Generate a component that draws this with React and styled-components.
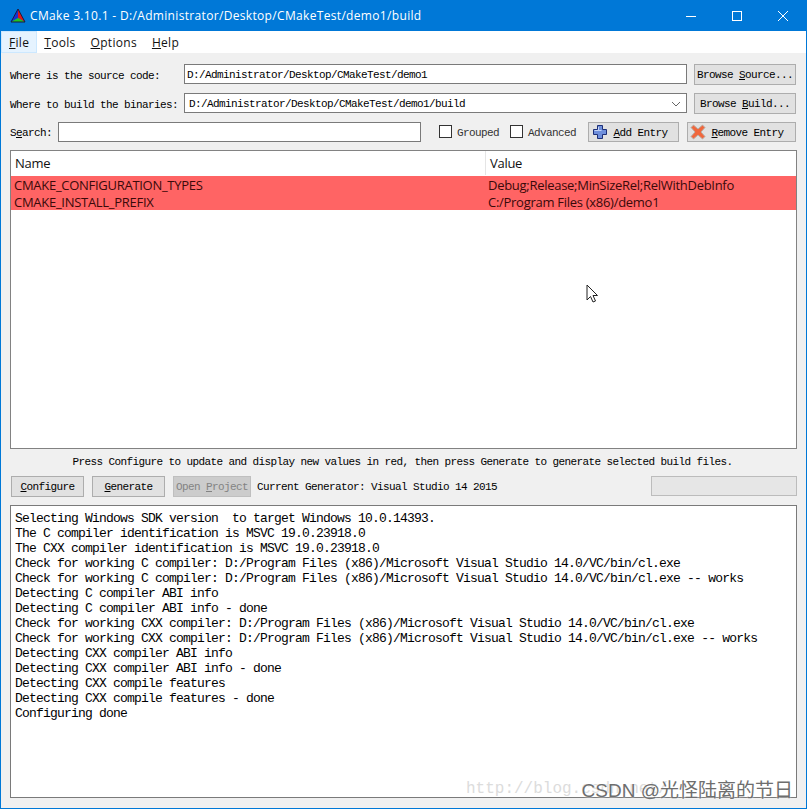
import React from "react";
import styled, { createGlobalStyle } from "styled-components";

const GlobalStyle = createGlobalStyle`
  html, body {
    margin: 0;
    padding: 0;
    background: #f0f0f0;
  }
  * {
    box-sizing: border-box;
  }
`;

const mono = `"Liberation Mono", "DejaVu Sans Mono", monospace`;
const ui = `"Open Sans", "Noto Sans", sans-serif`;

const Window = styled.div`
  position: relative;
  width: 807px;
  height: 809px;
  display: flex;
  flex-direction: column;
  background: #f0f0f0;
  border: 1px solid #0078d7;
  border-top: none;
  overflow: hidden;
`;

const TitleBar = styled.div`
  height: 31px;
  margin: 0 -1px;
  padding-right: 1px;
  display: flex;
  align-items: center;
  background: #0078d7;
  color: #fff;
  font: 12px ${ui};
`;

const Logo = styled.svg`
  width: 16px;
  height: 16px;
  margin: 0 4px 0 10px;
`;

const TitleText = styled.div`
  flex: 1;
  white-space: nowrap;
  letter-spacing: 0.33px;
`;

const WinButton = styled.div`
  width: 46px;
  height: 31px;
  display: flex;
  align-items: center;
  justify-content: center;
`;

const MenuBar = styled.div`
  height: 22px;
  display: flex;
  align-items: stretch;
  background: #fff;
  font: 12px ${ui};
  letter-spacing: 0.3px;
  color: #111;
`;

const MenuItem = styled.div`
  display: flex;
  align-items: center;
  padding: 0 8px;
  margin-right: -1px;
  background: ${(p) => (p.$active ? "#e5f3ff" : "transparent")};
  box-shadow: ${(p) => (p.$active ? "inset 0 0 0 1px #cce8ff" : "none")};
`;

const Mn = styled.span`
  text-decoration: underline;
`;

const Content = styled.div`
  flex: 1;
  display: flex;
  flex-direction: column;
  padding: 11px 9px 10px 9px;
  min-height: 0;
  font: 11px ${mono};
  letter-spacing: -0.6px;
  color: #000;
`;

const Row = styled.div`
  display: flex;
  align-items: flex-start;
  height: 21px;
  margin-bottom: ${(p) => p.$gap || "8px"};
  margin-right: ${(p) => p.$inset || "0"};
  white-space: pre;
`;

const Label = styled.div`
  width: ${(p) => p.$width};
  height: 20px;
  flex: none;
  display: flex;
  align-items: center;
  padding-top: ${(p) => p.$top || "3px"};
`;

const TextField = styled.div`
  flex: ${(p) => (p.$width ? "none" : "1")};
  width: ${(p) => p.$width || "auto"};
  height: 20px;
  display: flex;
  align-items: center;
  justify-content: space-between;
  padding: 1px ${(p) => (p.$combo ? "5px" : "2px")} 0 ${(p) => (p.$combo ? "4px" : "2px")};
  background: #fff;
  border: 1px solid #7a7a7a;
`;

const Button = styled.div`
  width: ${(p) => p.$width};
  height: ${(p) => p.$height || "21px"};
  flex: none;
  display: flex;
  align-items: center;
  justify-content: center;
  margin-left: ${(p) => p.$left || "0"};
  padding: 1px ${(p) => p.$shift || "0"} 0 0;
  background: ${(p) => (p.$disabled ? "#cccccc" : "#e1e1e1")};
  border: 1px solid ${(p) => (p.$disabled ? "#bfbfbf" : "#adadad")};
  color: ${(p) => (p.$disabled ? "#838383" : "#000")};
`;

const ButtonIcon = styled.svg`
  width: 16px;
  height: 16px;
  margin: -1px 5px 0 0;
`;

const Check = styled.div`
  width: 13px;
  height: 13px;
  flex: none;
  margin: 3px 5px 0 ${(p) => p.$left};
  background: #fff;
  border: 1px solid #333;
`;

const CheckLabel = styled.div`
  width: ${(p) => p.$width};
  height: 20px;
  flex: none;
  display: flex;
  align-items: center;
  padding-top: 1px;
  color: #333;
`;

const Table = styled.div`
  height: 299px;
  flex: none;
  display: flex;
  flex-direction: column;
  background: #fff;
  border: 1px solid #828282;
  font: 13px ${ui};
  letter-spacing: -0.28px;
  color: #111;
`;

const Columns = styled.div`
  display: grid;
  grid-template-columns: 474px 1fr;
  height: ${(p) => p.$height};
  align-items: center;
  padding-bottom: ${(p) => (p.$bg ? "3px" : "1px")};
  background: ${(p) => p.$bg || "transparent"};
  color: ${(p) => (p.$bg ? "#3a0a0a" : "#111")};
`;

const HeadCell = styled.div`
  height: 100%;
  display: flex;
  align-items: center;
  padding-left: 4px;
  border-left: ${(p) => (p.$divided ? "1px solid #e5e5e5" : "none")};
`;

const Cell = styled.div`
  padding-left: 3px;
  white-space: nowrap;
`;

const Hint = styled.div`
  height: 27px;
  flex: none;
  display: flex;
  align-items: center;
  justify-content: center;
  padding: 0 2px 2px 0;
  white-space: pre;
`;

const ActionRow = styled.div`
  height: 21px;
  flex: none;
  display: flex;
  align-items: center;
  padding-left: 1px;
  margin-bottom: 8px;
  white-space: pre;
`;

const Generator = styled.div`
  flex: 1;
  margin-left: 6px;
  padding-top: 1px;
`;

const Progress = styled.div`
  width: 146px;
  height: 20px;
  margin-top: -1px;
  background: #e6e6e6;
  border: 1px solid #bcbcbc;
`;

const Output = styled.div`
  flex: 1;
  min-height: 0;
  padding: 5px 4px;
  background: #fff;
  border: 1px solid #7a7a7a;
  font: 13px/15px ${mono};
  letter-spacing: -0.8px;
  color: #000;
  white-space: pre;
`;

const Cursor = styled.svg`
  position: absolute;
  left: 585px;
  top: 284px;
  width: 13px;
  height: 20px;
`;

const Watermark = styled.div`
  position: absolute;
  left: 465px;
  bottom: 7px;
  width: 328px;
  height: 24px;
  overflow: hidden;
  font: 16px/24px ${mono};
  color: #dcdcdc;
  white-space: nowrap;
`;

const Signature = styled.div`
  position: absolute;
  right: 13px;
  bottom: 6px;
  font: 19px/22px "Liberation Sans", "Noto Sans CJK SC", sans-serif;
  color: #6e6e6e;
  white-space: nowrap;
  text-shadow: 0 0 2px #fff;
`;

const outputLines = [
  "Selecting Windows SDK version  to target Windows 10.0.14393.",
  "The C compiler identification is MSVC 19.0.23918.0",
  "The CXX compiler identification is MSVC 19.0.23918.0",
  "Check for working C compiler: D:/Program Files (x86)/Microsoft Visual Studio 14.0/VC/bin/cl.exe",
  "Check for working C compiler: D:/Program Files (x86)/Microsoft Visual Studio 14.0/VC/bin/cl.exe -- works",
  "Detecting C compiler ABI info",
  "Detecting C compiler ABI info - done",
  "Check for working CXX compiler: D:/Program Files (x86)/Microsoft Visual Studio 14.0/VC/bin/cl.exe",
  "Check for working CXX compiler: D:/Program Files (x86)/Microsoft Visual Studio 14.0/VC/bin/cl.exe -- works",
  "Detecting CXX compiler ABI info",
  "Detecting CXX compiler ABI info - done",
  "Detecting CXX compile features",
  "Detecting CXX compile features - done",
  "Configuring done",
];

const App = () => {
  return (
    <Window>
      <GlobalStyle />
      <TitleBar>
        <Logo viewBox="0 0 16 16">
          <path d="M8 1 L1 14 L8 10 Z" fill="#1a2fd0" />
          <path d="M8 1 L15 14 L8 10 Z" fill="#e01818" />
          <path d="M1 14 L8 10 L15 14 Z" fill="#22c422" />
          <path d="M8 1 L1 14 L15 14 Z" fill="none" stroke="#1a1a40" strokeWidth="1" />
        </Logo>
        <TitleText>CMake 3.10.1 - D:/Administrator/Desktop/CMakeTest/demo1/build</TitleText>
        <WinButton>
          <svg width="10" height="10" viewBox="0 0 10 10">
            <path d="M0 5.5 H10" stroke="#fff" strokeWidth="1" />
          </svg>
        </WinButton>
        <WinButton>
          <svg width="10" height="10" viewBox="0 0 10 10">
            <rect x="0.5" y="0.5" width="9" height="9" fill="none" stroke="#fff" strokeWidth="1" />
          </svg>
        </WinButton>
        <WinButton>
          <svg width="10" height="10" viewBox="0 0 10 10">
            <path d="M0 0 L10 10 M10 0 L0 10" stroke="#fff" strokeWidth="1" />
          </svg>
        </WinButton>
      </TitleBar>
      <MenuBar>
        <MenuItem $active>
          <Mn>F</Mn>ile
        </MenuItem>
        <MenuItem>
          <Mn>T</Mn>ools
        </MenuItem>
        <MenuItem>
          <Mn>O</Mn>ptions
        </MenuItem>
        <MenuItem>
          <Mn>H</Mn>elp
        </MenuItem>
      </MenuBar>
      <Content>
        <Row $inset="1px">
          <Label $width="174px">Where is the source code:</Label>
          <TextField>D:/Administrator/Desktop/CMakeTest/demo1</TextField>
          <Button $width="102px" $left="7px">
            <span>
              Browse <Mn>S</Mn>ource...
            </span>
          </Button>
        </Row>
        <Row $inset="1px">
          <Label $width="174px">Where to build the binaries:</Label>
          <TextField $combo>
            D:/Administrator/Desktop/CMakeTest/demo1/build
            <svg width="10" height="6" viewBox="0 0 10 6">
              <path d="M1 1 L5 5 L9 1" fill="none" stroke="#666" strokeWidth="1" />
            </svg>
          </TextField>
          <Button $width="102px" $left="7px">
            <span>
              Browse <Mn>B</Mn>uild...
            </span>
          </Button>
        </Row>
        <Row $gap="7px">
          <Label $width="48px" $top="1px">
            <span>
              S<Mn>e</Mn>arch:
            </span>
          </Label>
          <TextField $width="363px" />
          <Check $left="18px" />
          <CheckLabel $width="53px">Grouped</CheckLabel>
          <Check $left="0" />
          <CheckLabel $width="60px">Advanced</CheckLabel>
          <Button $width="91px" $height="20px" $shift="7px">
            <ButtonIcon viewBox="0 0 16 16">
              <path
                d="M5.5 1.5 H10.5 V5.5 H14.5 V10.5 H10.5 V14.5 H5.5 V10.5 H1.5 V5.5 H5.5 Z"
                fill="#6f8fdc"
                stroke="#1c2f78"
                strokeWidth="1"
              />
              <path d="M6.5 6.5 H9.5 M6.5 3 V6.5 M2.5 6.5 H6.5" stroke="#c4d4f6" strokeWidth="1" fill="none" />
            </ButtonIcon>
            <span>
              <Mn>A</Mn>dd Entry
            </span>
          </Button>
          <Button $width="109px" $height="20px" $left="8px" $shift="9px">
            <ButtonIcon viewBox="0 0 16 16">
              <path
                d="M3.5 1 L8 5 L12.5 1 L15 3.5 L11 8 L15 12.5 L12.5 15 L8 11 L3.5 15 L1 12.5 L5 8 L1 3.5 Z"
                fill="#f0673c"
                stroke="#b9b2ac"
                strokeWidth="1"
              />
            </ButtonIcon>
            <span>
              <Mn>R</Mn>emove Entry
            </span>
          </Button>
        </Row>
        <Table>
          <Columns $height="25px">
            <HeadCell>Name</HeadCell>
            <HeadCell $divided>Value</HeadCell>
          </Columns>
          <Columns $height="17px" $bg="#ff6464">
            <Cell>CMAKE_CONFIGURATION_TYPES</Cell>
            <Cell>Debug;Release;MinSizeRel;RelWithDebInfo</Cell>
          </Columns>
          <Columns $height="17px" $bg="#ff6464">
            <Cell>CMAKE_INSTALL_PREFIX</Cell>
            <Cell>C:/Program Files (x86)/demo1</Cell>
          </Columns>
        </Table>
        <Hint>Press Configure to update and display new values in red, then press Generate to generate selected build files.</Hint>
        <ActionRow>
          <Button $width="73px">
            <span>
              <Mn>C</Mn>onfigure
            </span>
          </Button>
          <Button $width="73px" $left="8px">
            <span>
              <Mn>G</Mn>enerate
            </span>
          </Button>
          <Button $width="78px" $left="8px" $disabled>
            <span>
              Open <Mn>P</Mn>roject
            </span>
          </Button>
          <Generator>Current Generator: Visual Studio 14 2015</Generator>
          <Progress />
        </ActionRow>
        <Output>{outputLines.join("\n")}</Output>
      </Content>
      <Cursor viewBox="0 0 13 20">
        <path
          d="M1 1 V16 L4.5 12.5 L7 18 L9.5 17 L7 11.5 H11.5 Z"
          fill="#fff"
          stroke="#222"
          strokeWidth="1"
        />
      </Cursor>
      <Watermark>http://blog.csdn.net/</Watermark>
      <Signature>CSDN @光怪陆离的节日</Signature>
    </Window>
  );
};

export default App;
